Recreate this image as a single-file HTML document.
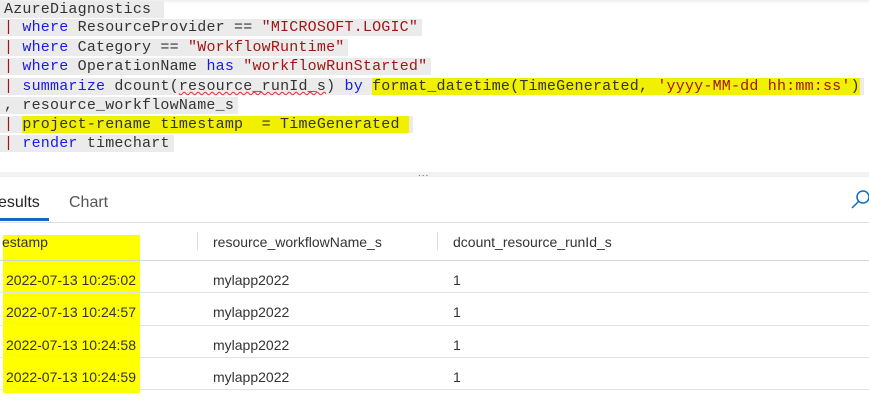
<!DOCTYPE html>
<html><head><style>
body{margin:0;width:869px;height:403px;overflow:hidden;background:#fff;position:relative;font-family:"Liberation Sans",sans-serif}
.l{position:absolute;left:0;height:19px;font:15px/19px "Liberation Mono",monospace;white-space:pre;color:#333;letter-spacing:0.2px}
.g{background:#ebebeb;padding-right:4px;padding-left:4px}
.p{color:#a31515}.k{color:#1a1ae6}.s{color:#a31515}
.h{background:#f0f000}
.sq{text-decoration:underline wavy #e03030;text-decoration-thickness:1px}
.a{position:absolute;font-size:14px;color:#333}
.hr{position:absolute;left:0;width:869px;height:1px;background:#e3e3e3}
</style></head><body>
<div style="position:absolute;left:0;top:0;width:869px;height:4px;background:linear-gradient(#eee,#fff)"></div>
<div class="l" style="top:0"><span class="g">AzureDiagnostics </span></div>
<div class="l" style="top:18px"><span class="g"><span class="p">|</span> <span class="k">where</span> ResourceProvider == <span class="s">"MICROSOFT.LOGIC"</span></span></div>
<div class="l" style="top:38px"><span class="g"><span class="p">|</span> <span class="k">where</span> Category == <span class="s">"WorkflowRuntime"</span></span></div>
<div class="l" style="top:57px"><span class="g"><span class="p">|</span> <span class="k">where</span> OperationName <span class="k">has</span> <span class="s">"workflowRunStarted"</span></span></div>
<div class="l" style="top:77px"><span class="g"><span class="p">|</span> <span class="k">summarize</span> dcount(<span class="sq">resource_runId_s</span>) <span class="k">by</span> <span class="h">format_datetime(TimeGenerated, <span class="s">'yyyy-MM-dd hh:mm:ss'</span>)</span></span></div>
<div class="l" style="top:96px"><span class="g">, resource_workflowName_s</span></div>
<div class="l" style="top:115px"><span class="g"><span class="p">|</span> <span class="h">project-rename timestamp  = TimeGenerated </span></span></div>
<div class="l" style="top:134px"><span class="g"><span class="p">|</span> <span class="k">render</span> timechart</span></div>
<div style="position:absolute;left:0;top:172px;width:869px;height:5px;background:#f2f2f2"></div>
<div style="position:absolute;left:418px;top:168px;font-size:10px;color:#666;letter-spacing:1px">...</div>
<div style="position:absolute;left:-2px;top:194px;font-size:16px;color:#222">esults</div>
<div style="position:absolute;left:69px;top:194px;font-size:16px;color:#555">Chart</div>
<div style="position:absolute;left:0;top:218px;width:49px;height:3px;background:#0f6cbd"></div>
<div class="hr" style="top:222px;background:#dcdcdc"></div>
<svg style="position:absolute;left:849px;top:189px" width="20" height="22"><circle cx="14" cy="8" r="6" fill="none" stroke="#0f6cbd" stroke-width="1.5"/><line x1="10" y1="12" x2="3" y2="19" stroke="#0f6cbd" stroke-width="1.5"/></svg>
<div style="position:absolute;left:3px;top:235px;width:137px;height:158px;background:#ffff00"></div>
<div style="position:absolute;left:197px;top:232px;width:1px;height:18px;background:#ddd"></div>
<div style="position:absolute;left:437px;top:232px;width:1px;height:18px;background:#ddd"></div>
<div class="a" style="left:2px;top:234px">estamp</div>
<div class="a" style="left:213px;top:234px">resource_workflowName_s</div>
<div class="a" style="left:453px;top:234px">dcount_resource_runId_s</div>
<div class="hr" style="top:260px;background:#d5d5d5"></div>
<div class="a" style="left:6px;top:272px">2022-07-13 10:25:02</div><div class="a" style="left:213px;top:272px">mylapp2022</div><div class="a" style="left:453px;top:272px">1</div>
<div class="hr" style="top:292px"></div>
<div class="a" style="left:6px;top:304px">2022-07-13 10:24:57</div><div class="a" style="left:213px;top:304px">mylapp2022</div><div class="a" style="left:453px;top:304px">1</div>
<div class="hr" style="top:325px"></div>
<div class="a" style="left:6px;top:337px">2022-07-13 10:24:58</div><div class="a" style="left:213px;top:337px">mylapp2022</div><div class="a" style="left:453px;top:337px">1</div>
<div class="hr" style="top:357px"></div>
<div class="a" style="left:6px;top:369px">2022-07-13 10:24:59</div><div class="a" style="left:213px;top:369px">mylapp2022</div><div class="a" style="left:453px;top:369px">1</div>
<div class="hr" style="top:389px"></div>
</body></html>
